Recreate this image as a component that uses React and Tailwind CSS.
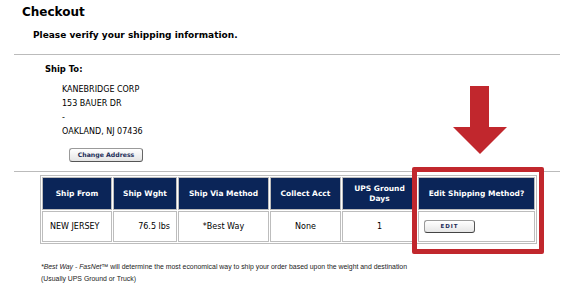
export default function App() {
  const th = 'border border-[#bdbdbd] bg-[#0b2558] text-white font-bold text-[7.5px] leading-[10px] text-center p-0';
  const td = 'border border-[#bdbdbd] bg-white text-[8px] leading-[10px] p-0';

  return (
    <div className="relative w-[574px] h-[289px] overflow-hidden bg-white text-black font-['DejaVu_Sans',sans-serif]">
      <h1 className="pl-[22px] h-[24px] leading-[24px] text-[12px] font-bold">Checkout</h1>
      <p className="pl-[33px] h-[22px] leading-[22px] text-[9px] font-bold">Please verify your shipping information.</p>
      <div className="ml-[14px] mt-[8px] w-[546px] border-t border-[#bbbbbb]" />

      <div className="pl-[45px] h-[28px] leading-[28px] text-[8.4px] font-bold">Ship To:</div>
      <div className="pl-[62px] text-[8px] leading-[14px]">
        <div>KANEBRIDGE CORP</div>
        <div>153 BAUER DR</div>
        <div>-</div>
        <div>OAKLAND, NJ 07436</div>
      </div>
      <div className="flex pl-[69px] mt-[9px]">
        <button className="w-[74px] h-[14px] rounded-[3px] border border-[#9a9a9a] border-b-[#555] border-r-[#666] bg-gradient-to-b from-white to-[#e4e4e4] text-[6.2px] font-bold text-[#1b2b57] leading-[12px]">
          Change Address
        </button>
      </div>
      <div className="ml-[14px] mt-[9px] w-[546px] border-t border-[#bbbbbb]" />

      <div className="flex pl-[40px] mt-[3px]">
        <table className="table-fixed border border-[#bdbdbd] border-separate border-spacing-[1px]">
          <thead>
            <tr className="h-[33px]">
              <th className={`${th} w-[70px]`}>Ship From</th>
              <th className={`${th} w-[64px]`}>Ship Wght</th>
              <th className={`${th} w-[91px]`}>Ship Via Method</th>
              <th className={`${th} w-[71px]`}>Collect Acct</th>
              <th className={`${th} w-[75px]`}>UPS Ground<br />Days</th>
              <th className={`${th} w-[117px]`}>Edit Shipping Method?</th>
            </tr>
          </thead>
          <tbody>
            <tr className="h-[31px]">
              <td className={`${td} pl-[7px]`}>NEW JERSEY</td>
              <td className={`${td} text-right pr-[6px]`}>76.5 lbs</td>
              <td className={`${td} text-center`}>*Best Way</td>
              <td className={`${td} text-center`}>None</td>
              <td className={`${td} text-center`}>1</td>
              <td className={`${td} pl-[5px]`}>
                <button className="block w-[51px] h-[13px] rounded-[3px] border border-[#9a9a9a] border-b-[#444] border-r-[#555] bg-gradient-to-b from-white to-[#e6e6e6] text-[5.5px] font-bold tracking-[1px] text-[#1b2b57] leading-[11px]">
                  EDIT
                </button>
              </td>
            </tr>
          </tbody>
        </table>
      </div>

      <div className="pl-[41px] mt-[17px] text-[6.9px] leading-[12px] text-[#222] font-['Liberation_Sans',Arial,sans-serif]">
        <div><i>*Best Way - FasNet™</i> will determine the most economical way to ship your order based upon the weight and destination</div>
        <div>(Usually UPS Ground or Truck)</div>
      </div>

      {/* callout overlay */}
      <svg className="absolute left-[453px] top-[86px]" width="54" height="68" viewBox="0 0 54 68">
        <polygon points="17,0 36,0 36,41 54,41 27,68 0,41 17,41" fill="#c1272d" />
      </svg>
      <div className="absolute left-[412px] top-[167px] w-[132px] h-[87px] border-[5px] border-[#c1272d] rounded-[2px]" />
    </div>
  );
}
